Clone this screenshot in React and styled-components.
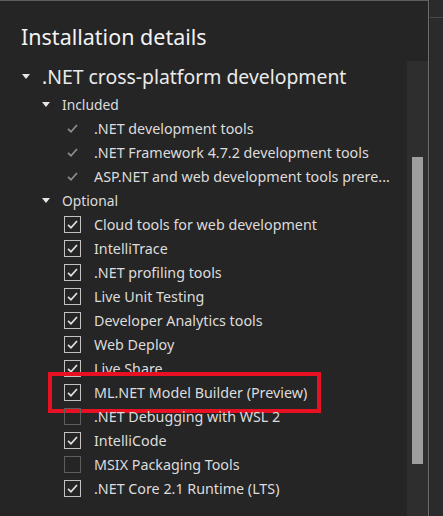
import React from 'react'
import styled, { createGlobalStyle } from 'styled-components'

const GlobalStyle = createGlobalStyle`
  html, body {
    margin: 0;
    padding: 0;
    background: #252526;
    height: 516px;
    overflow: hidden;
  }
  * {
    box-sizing: border-box;
  }
`

const Frame = styled.div`
  display: flex;
  width: 443px;
  height: 516px;
  font-family: 'Noto Sans', 'Open Sans', sans-serif;
  color: #e4e4e4;
`

const MainPanel = styled.div`
  width: 429px;
  display: flex;
  flex-direction: column;
  background: #252526;
  border-top: 1px solid #5f5f5f;
  border-right: 1px solid #6e6e6e;
`

const SidePanel = styled.div`
  flex: 1;
  margin-left: 1px;
  background: #2b2b2c;
`

const SideHead = styled.div`
  height: 18px;
  border-bottom: 1px solid #4a4a4a;
`

const TitleBar = styled.div`
  height: 60px;
  padding: 21px 0 0 21px;
`

const Title = styled.h1`
  margin: 0;
  font-size: 21.5px;
  font-weight: 400;
  line-height: 30px;
  color: #f3f3f3;
`

const Body = styled.div`
  flex: 1;
  display: flex;
`

const List = styled.div`
  flex: 1;
  display: flex;
  flex-direction: column;
`

const Row = styled.div`
  position: relative;
  display: flex;
  align-items: center;
  height: ${(p) => p.h || 24}px;
  padding-left: ${(p) => p.indent}px;
  font-size: ${(p) => p.size || 14.3}px;
  color: ${(p) => p.color || '#dcdcdc'};
  white-space: nowrap;
`

const Caret = styled.span`
  width: 0;
  height: 0;
  border-left: 4px solid transparent;
  border-right: 4px solid transparent;
  border-top: 5px solid #e6e6e6;
  margin-right: ${(p) => p.gap}px;
`

const IconSlot = styled.span`
  width: 17px;
  height: 17px;
  margin-right: 13px;
  display: flex;
  align-items: center;
  justify-content: center;
  border: ${(p) => (p.box ? `1px solid ${p.box}` : 'none')};
`

const Highlight = styled.div`
  position: absolute;
  left: 48px;
  top: -8px;
  width: 273px;
  height: 41px;
  border: 4px solid #e81123;
  pointer-events: none;
`

const Track = styled.div`
  width: 21px;
  background: #2e2e2f;
  padding: 96px 5px 0;
`

const Thumb = styled.div`
  height: 307px;
  background: #9e9e9e;
`

const Check = ({ color }) => (
  <svg width='13' height='13' viewBox='0 0 13 13'>
    <path d='M2 6.8 L5 9.8 L11 3' fill='none' stroke={color} strokeWidth='1.8' />
  </svg>
)

const included = [
  '.NET development tools',
  '.NET Framework 4.7.2 development tools',
  'ASP.NET and web development tools prere...',
]

const optional = [
  ['Cloud tools for web development', true],
  ['IntelliTrace', true],
  ['.NET profiling tools', true],
  ['Live Unit Testing', true],
  ['Developer Analytics tools', true],
  ['Web Deploy', true],
  ['Live Share', true],
  ['ML.NET Model Builder (Preview)', true, true],
  ['.NET Debugging with WSL 2', false],
  ['IntelliCode', true],
  ['MSIX Packaging Tools', false],
  ['.NET Core 2.1 Runtime (LTS)', true],
]

const App = () => {
  return (
    <>
      <GlobalStyle />
      <Frame>
        <MainPanel>
          <TitleBar>
            <Title>Installation details</Title>
          </TitleBar>
          <Body>
            <List>
              <Row indent={22} h={31} size={19.4} color='#eaeaea'>
                <Caret gap={12} />
                .NET cross-platform development
              </Row>
              <Row indent={42} size={13.8}>
                <Caret gap={12} />
                Included
              </Row>
              {included.map((name) => (
                <Row key={name} indent={64}>
                  <IconSlot>
                    <Check color='#8c8c8c' />
                  </IconSlot>
                  {name}
                </Row>
              ))}
              <Row indent={42} size={13.8}>
                <Caret gap={12} />
                Optional
              </Row>
              {optional.map(([name, on, marked]) => (
                <Row key={name} indent={64}>
                  <IconSlot box={on ? '#c2c2c2' : '#5e5e5e'}>
                    {on && <Check color='#dedede' />}
                  </IconSlot>
                  {name}
                  {marked && <Highlight />}
                </Row>
              ))}
            </List>
            <Track>
              <Thumb />
            </Track>
          </Body>
        </MainPanel>
        <SidePanel>
          <SideHead />
        </SidePanel>
      </Frame>
    </>
  )
}

export default App
